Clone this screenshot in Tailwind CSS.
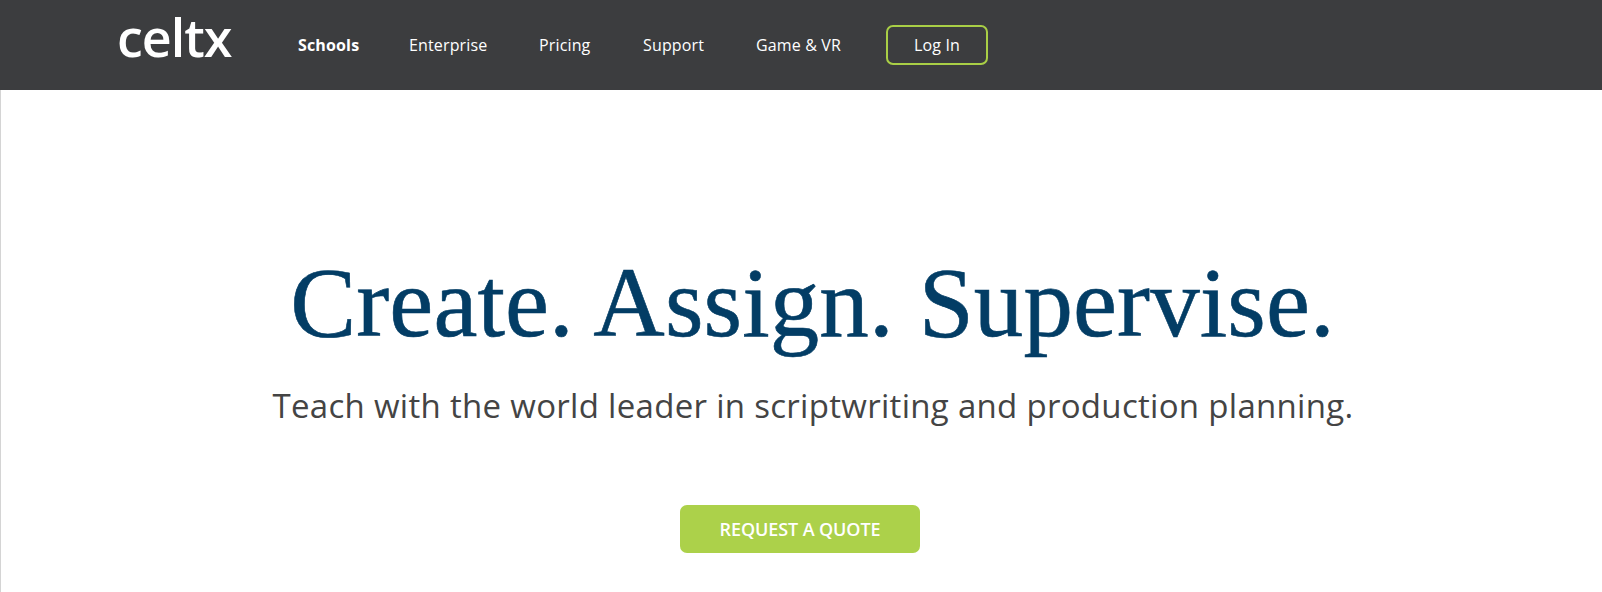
<!DOCTYPE html>
<html lang="en">
<head>
    <meta charset="UTF-8">
    <meta name="viewport" content="width=device-width, initial-scale=1.0">
    <title>Celtx</title>
    <script src="https://cdn.jsdelivr.net/npm/@tailwindcss/browser@4"></script>
</head>

<body class="h-[592px] overflow-hidden bg-white font-['Open_Sans',sans-serif]">
    <!-- header -->
    <header class="h-[90px] bg-[#3c3d3f] flex items-center pl-[117px] text-white">
        <a href="#" class="w-[181px] text-[52px] font-semibold leading-none tracking-[-1px] mb-[16px]">celtx</a>
        <nav class="flex items-center text-[16px] tracking-[0.15px]">
            <a href="#" class="w-[111px] font-bold">Schools</a>
            <a href="#" class="w-[130px]">Enterprise</a>
            <a href="#" class="w-[104px]">Pricing</a>
            <a href="#" class="w-[113px]">Support</a>
            <a href="#" class="w-[130px]">Game &amp; VR</a>
            <a href="#" class="w-[102px] h-[40px] flex items-center justify-center border-2 border-[#a9cf46] rounded-[7px]">Log In</a>
        </nav>
    </header>

    <!-- hero -->
    <main class="h-[502px] border-l border-[#d4d4d4] pt-[158px] flex flex-col items-center">
        <h1 class="ml-[22px] font-['Liberation_Serif',serif] text-[99px] leading-[110px] tracking-[0.1px] text-[#033d65] whitespace-nowrap [-webkit-text-stroke:0.6px_#033d65]">Create. Assign. Supervise.</h1>
        <p class="ml-[23px] mt-[24px] text-[33px] leading-[48px] tracking-[0.3px] text-[#444444] whitespace-nowrap">Teach with the world leader in scriptwriting and production planning.</p>
        <a href="#" class="mt-[75px] mr-[3px] w-[240px] h-[48px] flex items-center justify-center bg-[#acd14a] rounded-[7px] text-white text-[18px] font-semibold tracking-[-0.1px]">REQUEST A QUOTE</a>
    </main>
</body>
</html>
